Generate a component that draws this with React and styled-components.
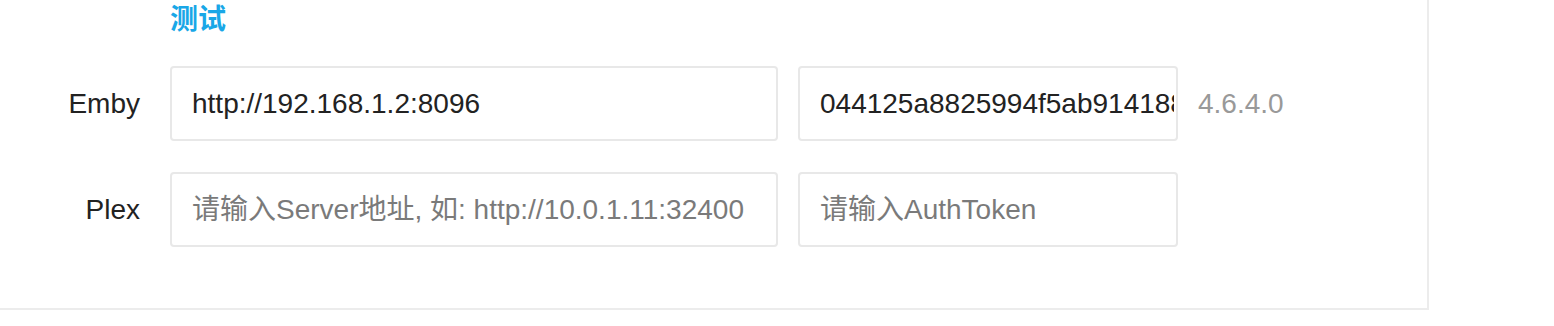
import React from 'react';
import styled, { createGlobalStyle } from 'styled-components';

const GlobalStyle = createGlobalStyle`
  html, body {
    margin: 0;
    padding: 0;
    background: #fff;
  }
  body {
    font-family: "Liberation Sans", Arial, "Noto Sans CJK SC", sans-serif;
  }
`;

const Panel = styled.div`
  width: 1427px;
  height: 308px;
  border-right: 2px solid #ececec;
  border-bottom: 2px solid #ececec;
  background: #fff;
  box-sizing: content-box;
`;

const Title = styled.a`
  display: block;
  width: max-content;
  margin-left: 170px;
  height: 34px;
  line-height: 34px;
  font-size: 28px;
  font-weight: 700;
  color: #19a7e7;
  text-decoration: none;
  font-family: "Noto Sans CJK SC", sans-serif;
  cursor: pointer;
`;

const Form = styled.div`
  display: flex;
  flex-direction: column;
  gap: 31px;
  margin-top: 32px;
`;

const Row = styled.div`
  display: flex;
  align-items: center;
`;

const Label = styled.label`
  width: 140px;
  margin-right: 30px;
  text-align: right;
  font-size: 28px;
  color: #222;
`;

const Field = styled.input`
  box-sizing: border-box;
  width: ${(p) => p.$width}px;
  height: 75px;
  margin-right: ${(p) => p.$gap || 0}px;
  padding: 0 ${(p) => p.$padRight ?? 20}px 0 20px;
  border: 2px solid #e8e8e8;
  border-radius: 4px;
  background: #fff;
  font-family: "Liberation Sans", Arial, "Noto Sans CJK SC", sans-serif;
  font-size: 28px;
  color: #222;
  outline: none;

  &::placeholder {
    color: #7a7a7a;
  }
`;

const Version = styled.span`
  font-size: 28px;
  color: #999;
`;

const servers = [
  {
    name: 'Emby',
    host: 'http://192.168.1.2:8096',
    token: '044125a8825994f5ab914188e7',
    version: '4.6.4.0',
  },
  {
    name: 'Plex',
    host: '',
    token: '',
    version: '',
  },
];

const App = () => (
  <>
    <GlobalStyle />
    <Panel>
      <Title>测试</Title>
      <Form>
        {servers.map((s) => (
          <Row key={s.name}>
            <Label>{s.name}</Label>
            <Field
              $width={608}
              $gap={20}
              defaultValue={s.host}
              placeholder="请输入Server地址, 如: http://10.0.1.11:32400"
            />
            <Field
              $width={380}
              $gap={20}
              $padRight={2}
              defaultValue={s.token}
              placeholder="请输入AuthToken"
            />
            {s.version && <Version>{s.version}</Version>}
          </Row>
        ))}
      </Form>
    </Panel>
  </>
);

export default App;
